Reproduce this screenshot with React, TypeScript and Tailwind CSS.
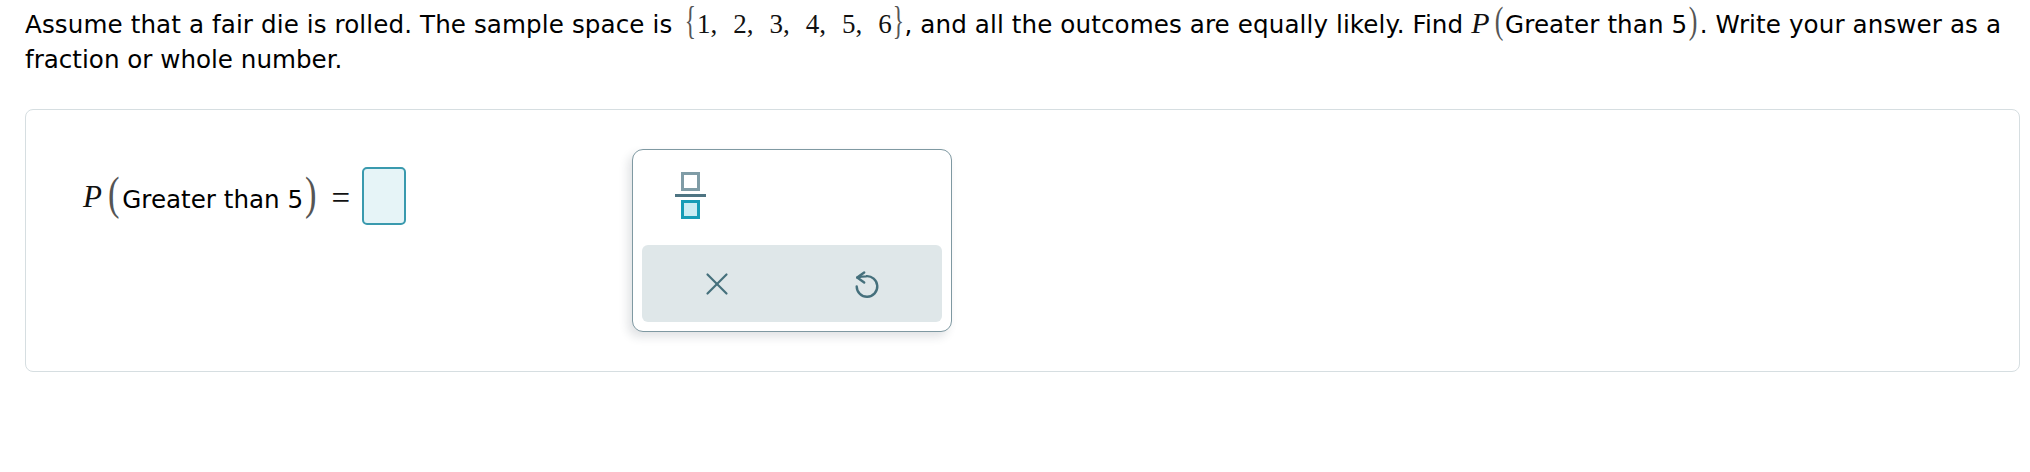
import React from "react";

const serif = "font-['Liberation_Serif','Times_New_Roman',serif]";

function SetMath() {
  const nums = ["1", "2", "3", "4", "5", "6"];
  return (
    <span className={`${serif} inline-flex items-baseline text-[27px] leading-[20px] text-[#111] ml-[4px] tracking-normal`}>
      <span className="inline-block text-[39px] leading-[20px] text-[#555] font-light scale-x-[0.6] -mx-[3px] relative top-[1px]">{"{"}</span>
      {nums.map((n, i) => (
        <span key={n} className="inline-block">
          {n}
          {i < nums.length - 1 && <span className="inline-block mr-[16px]">,</span>}
        </span>
      ))}
      <span className="inline-block text-[39px] leading-[20px] text-[#555] font-light scale-x-[0.6] -mx-[3px] relative top-[1px]">{"}"}</span>
    </span>
  );
}

function XIcon() {
  return (
    <svg width="24" height="24" viewBox="0 0 24 24" fill="none" stroke="#45707c" strokeWidth="2.2" strokeLinecap="round">
      <path d="M2.5 2.5L21.5 21.5" />
      <path d="M21.5 2.5L2.5 21.5" />
    </svg>
  );
}

function UndoIcon() {
  return (
    <svg width="30" height="30" viewBox="0 0 30 30" fill="none" stroke="#45707c" strokeWidth="2.4" strokeLinecap="round" strokeLinejoin="round">
      <path d="M5.5 8.5Q9 7.3 14 7.2A10.3 10.3 0 1 1 4.7 17.5" />
      <path d="M12.2 3.5L5.2 8.5L12.2 13.5" />
    </svg>
  );
}

export default function App() {
  return (
    <div className="relative w-[2030px] h-[472px] bg-white text-black font-['DejaVu_Sans','Verdana',sans-serif] text-[24.6px]">
      <div className="pl-[25px] pt-[7px] leading-[35px]">
        <div className="whitespace-nowrap h-[35px] flex items-baseline tracking-[0.1px]">
          <span>Assume that a fair die is rolled. The sample space is&nbsp;</span>
          <SetMath />
          <span>, and all the outcomes are equally likely. Find&nbsp;</span>
          <span className={`${serif} italic text-[30px] leading-[20px] text-[#111] mr-[3px]`}>P</span>
          <span className={`${serif} inline-block text-[37px] leading-[20px] text-[#555] font-light scale-x-[0.7]`}>(</span>
          <span>Greater than 5</span>
          <span className={`${serif} inline-block text-[37px] leading-[20px] text-[#555] font-light scale-x-[0.7]`}>)</span>
          <span>. Write your answer as a</span>
        </div>
        <div className="h-[35px]">fraction or whole number.</div>
      </div>

      <div className="mt-[32px] ml-[25px] w-[1995px] h-[263px] border border-[#d6dee1] rounded-[8px] pl-[57px] pt-[57px]">
        <div className="flex items-center h-[58px]">
          <span className={`${serif} italic text-[31px] text-[#111] mr-[4px] relative top-[1px]`}>P</span>
          <span className={`${serif} inline-block text-[46px] text-[#555] font-light scale-x-[0.75] leading-none relative -top-[2px]`}>(</span>
          <span className="ml-[1px] relative top-[4px]">Greater than 5</span>
          <span className={`${serif} inline-block text-[46px] text-[#555] font-light scale-x-[0.75] leading-none relative -top-[2px]`}>)</span>
          <span className={`${serif} text-[33px] text-[#111] ml-[13px] mr-[12px] relative top-[3px]`}>=</span>
          <div className="w-[44px] h-[58px] rounded-[5px] border-2 border-[#3a9aae] bg-[#e6f4f7]" />
        </div>
      </div>

      <div className="absolute left-[632px] top-[149px] w-[320px] h-[183px] bg-white border border-[#7f99a2] rounded-[11px] shadow-[-4px_5px_10px_rgba(40,60,70,0.14)] flex flex-col">
        <div className="h-[95px] pl-[42px] pt-[22px]">
          <div className="flex flex-col items-center w-[31px]">
            <div className="w-[19px] h-[19px] border-[3px] border-[#7f9ca6] bg-white" />
            <div className="w-[31px] h-[3px] bg-[#4e7482] mt-[3px] mb-[3px]" />
            <div className="w-[19px] h-[19px] border-[3px] border-[#169cb6] bg-[#c9ecf3]" />
          </div>
        </div>
        <div className="mx-[9px] h-[77px] rounded-[6px] bg-[#dfe7e9] grid grid-cols-2 items-center">
          <div className="flex justify-center"><XIcon /></div>
          <div className="flex justify-center"><UndoIcon /></div>
        </div>
      </div>
    </div>
  );
}
